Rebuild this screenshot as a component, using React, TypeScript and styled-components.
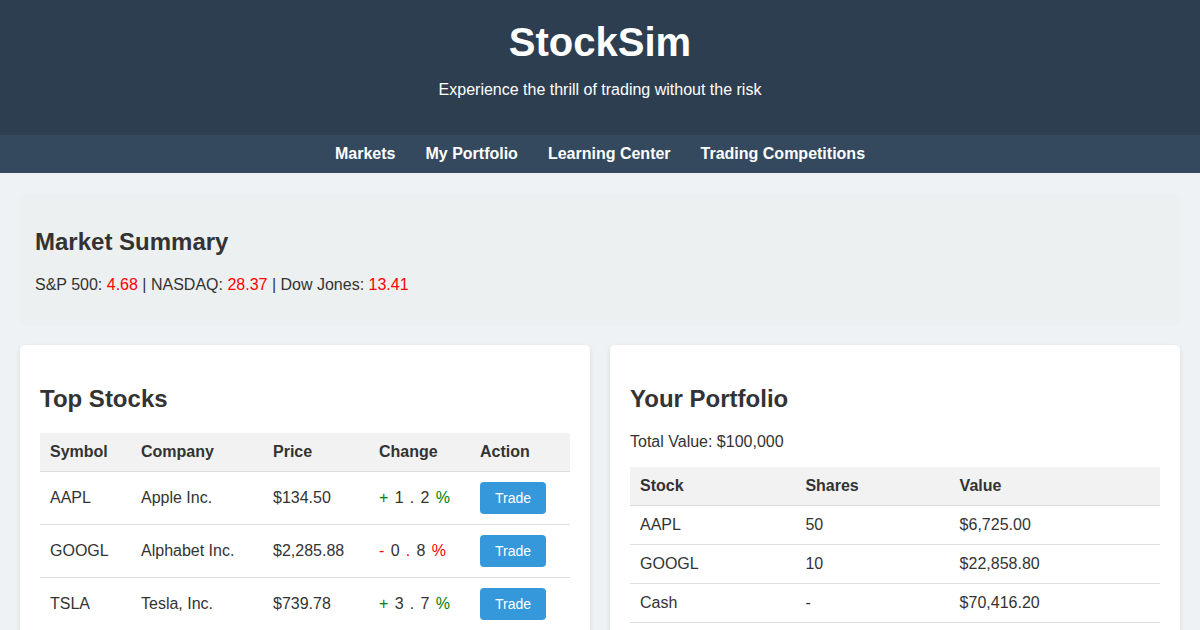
import styled, { createGlobalStyle } from 'styled-components';

const GlobalStyle = createGlobalStyle`
  body {
    margin: 0;
    font-family: "Liberation Sans", Arial, sans-serif;
    background-color: #eef2f5;
    color: #333;
  }
`;

type Stock = {
  symbol: string;
  company: string;
  price: string;
  change: string;
};

const stocks: Stock[] = [
  { symbol: 'AAPL', company: 'Apple Inc.', price: '$134.50', change: '+1.2%' },
  { symbol: 'GOOGL', company: 'Alphabet Inc.', price: '$2,285.88', change: '-0.8%' },
  { symbol: 'TSLA', company: 'Tesla, Inc.', price: '$739.78', change: '+3.7%' },
];

const holdings = [
  { stock: 'AAPL', shares: '50', value: '$6,725.00' },
  { stock: 'GOOGL', shares: '10', value: '$22,858.80' },
  { stock: 'Cash', shares: '-', value: '$70,416.20' },
];

const navLinks = ['Markets', 'My Portfolio', 'Learning Center', 'Trading Competitions'];

// each character of the change is its own span, signs and % take the tint
const Change = ({ value }: { value: string }) => {
  const up = value.startsWith('+');
  const chars = value.split('');
  return (
    <ChangeText>
      {chars.map((c, i) => {
        const tinted = c === '+' || c === '-' || c === '%' || (!up && c === '.');
        return (
          <ChangeChar key={i} $tint={tinted ? (up ? 'green' : 'red') : undefined}>
            {c}
          </ChangeChar>
        );
      })}
    </ChangeText>
  );
};

const App = () => {
  return (
    <>
      <GlobalStyle />
      <Header>
        <Title>StockSim</Title>
        <Tagline>Experience the thrill of trading without the risk</Tagline>
      </Header>
      <Nav>
        {navLinks.map((l) => (
          <NavLink key={l} href="#">
            {l}
          </NavLink>
        ))}
      </Nav>
      <Main>
        <Summary>
          <SectionTitle>Market Summary</SectionTitle>
          <Text>
            S&amp;P 500: <Index>4.68</Index> | NASDAQ: <Index>28.37</Index> | Dow Jones:{' '}
            <Index>13.41</Index>
          </Text>
        </Summary>
        <Columns>
          <Card>
            <SectionTitle>Top Stocks</SectionTitle>
            <Table>
              <thead>
                <tr>
                  <Th $width={91}>Symbol</Th>
                  <Th $width={132}>Company</Th>
                  <Th $width={106}>Price</Th>
                  <Th $width={101}>Change</Th>
                  <Th $width={100}>Action</Th>
                </tr>
              </thead>
              <tbody>
                {stocks.map((s) => (
                  <tr key={s.symbol}>
                    <Td>{s.symbol}</Td>
                    <Td>{s.company}</Td>
                    <Td>{s.price}</Td>
                    <Td>
                      <Change value={s.change} />
                    </Td>
                    <Td>
                      <TradeButton>Trade</TradeButton>
                    </Td>
                  </tr>
                ))}
              </tbody>
            </Table>
          </Card>
          <Card>
            <SectionTitle>Your Portfolio</SectionTitle>
            <Text>Total Value: $100,000</Text>
            <Table>
              <thead>
                <tr>
                  <Th>Stock</Th>
                  <Th>Shares</Th>
                  <Th>Value</Th>
                </tr>
              </thead>
              <tbody>
                {holdings.map((h) => (
                  <tr key={h.stock}>
                    <Td>{h.stock}</Td>
                    <Td>{h.shares}</Td>
                    <Td>{h.value}</Td>
                  </tr>
                ))}
              </tbody>
            </Table>
          </Card>
        </Columns>
      </Main>
    </>
  );
};

export default App;

const Header = styled.header`
  background-color: #2c3e50;
  color: #fff;
  text-align: center;
  padding: 20px;
`;

const Title = styled.h1`
  margin: 0;
  font-size: 40px;
  font-weight: bold;
`;

const Tagline = styled.p`
  margin: 16px 0;
  font-size: 16px;
`;

const Nav = styled.nav`
  background-color: #34495e;
  display: flex;
  justify-content: center;
  padding: 10px;
`;

const NavLink = styled.a`
  color: #fff;
  text-decoration: none;
  font-weight: bold;
  font-size: 16px;
  margin: 0 15px;
`;

const Main = styled.main`
  padding: 20px;
  display: flex;
  flex-direction: column;
  gap: 20px;
`;

const Summary = styled.section`
  background-color: #ecf0f1;
  padding: 15px;
  border-radius: 5px;
`;

const SectionTitle = styled.h2`
  font-size: 24px;
  margin: 20px 0;
  color: #333;
`;

const Text = styled.p`
  margin: 16px 0;
  font-size: 16px;
`;

const Index = styled.span`
  color: red;
`;

const Columns = styled.div`
  display: grid;
  grid-template-columns: 1fr 1fr;
  gap: 20px;
`;

const Card = styled.section`
  background-color: #fff;
  border-radius: 5px;
  padding: 20px;
  box-shadow: 0 2px 5px rgba(0, 0, 0, 0.1);
`;

const Table = styled.table`
  width: 100%;
  border-collapse: collapse;
  font-size: 16px;
`;

const Th = styled.th<{ $width?: number }>`
  text-align: left;
  padding: 10px;
  background-color: #f2f2f2;
  border-bottom: 1px solid #ddd;
  font-weight: bold;
  ${({ $width }) => ($width ? `width: ${$width}px;` : '')}
  box-sizing: border-box;
`;

const Td = styled.td`
  text-align: left;
  padding: 10px;
  border-bottom: 1px solid #ddd;
`;

const ChangeText = styled.span`
  display: inline-flex;
  gap: 6.3px;
`;

const ChangeChar = styled.span<{ $tint?: string }>`
  color: ${({ $tint }) => $tint ?? '#333'};
`;

const TradeButton = styled.button`
  background-color: #3498db;
  color: #fff;
  border: none;
  border-radius: 4px;
  padding: 8px 15px;
  font-family: "Liberation Sans", Arial, sans-serif;
  font-size: 14px;
  line-height: 16px;
  cursor: pointer;
`;
